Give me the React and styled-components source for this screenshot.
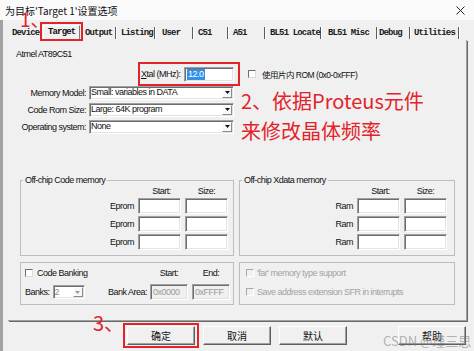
import React from 'react';
import styled, { createGlobalStyle } from 'styled-components';

const UI = `"Liberation Sans", "Noto Sans CJK SC", Arial, sans-serif`;
const CJK = `"Noto Sans CJK SC", "Liberation Sans", sans-serif`;
const MONO = `"Liberation Mono", "DejaVu Sans Mono", monospace`;
const RED = '#e3232a';

const GlobalStyle = createGlobalStyle`
  html, body { margin: 0; padding: 0; background: #f0f0f0; }
  body { width: 474px; height: 351px; overflow: hidden; }
`;

const Window = styled.div`
  position: relative;
  width: 474px;
  height: 351px;
  display: flex;
  flex-direction: column;
  font-family: ${UI};
  font-size: 9px;
  letter-spacing: -0.5px;
  color: #111;
  overflow: hidden;
`;

const TitleBar = styled.div`
  height: 20px;
  flex: none;
  display: flex;
  align-items: center;
  justify-content: space-between;
  padding: 0 9px 0 5px;
  background: #fafafa;
`;

const Title = styled.span`
  font-family: ${CJK};
  font-size: 10px;
  letter-spacing: 0;
`;

const Body = styled.div`
  flex: 1;
  display: flex;
  flex-direction: column;
  border-left: 3px solid #a2a2a2;
  background: #f0f0f0;
`;

const TabStrip = styled.div`
  height: 20px;
  flex: none;
  display: flex;
  align-items: flex-end;
  padding-left: 5px;
  position: relative;
  z-index: 1;
`;

const Tab = styled.div`
  width: ${p => p.$w}px;
  height: 12px;
  margin-bottom: 1px;
  padding-left: ${p => p.$pl}px;
  box-sizing: border-box;
  font-family: ${MONO};
  font-weight: 700;
  font-size: 9px;
  letter-spacing: -0.85px;
  line-height: 12px;
  white-space: nowrap;
  color: #1a1a1a;
  border-right: ${p => (p.$sep ? '1px solid #5a5a5a' : 'none')};
  box-shadow: ${p => (p.$sep ? '1px 0 0 #fff' : 'none')};
`;

const ActiveFrame = styled.div`
  width: 43px;
  height: 19px;
  box-sizing: border-box;
  border: 2px solid ${RED};
  padding: 1px 1px 0 1px;
  margin-bottom: -1px;
  display: flex;
`;

const ActiveTab = styled.div`
  flex: 1;
  border-top: 1px solid #fff;
  border-left: 1px solid #fff;
  border-right: 1px solid #7a7a7a;
  padding-left: 4px;
  font-family: ${MONO};
  font-weight: 700;
  font-size: 9px;
  letter-spacing: -0.85px;
  line-height: 13px;
  color: #111;
`;

const Panel = styled.div`
  margin-left: 5px;
  width: 459px;
  height: 281px;
  flex: none;
  box-sizing: border-box;
  border-right: 1px solid #a0a0a0;
  border-bottom: 1px solid #a0a0a0;
  box-shadow: 1px 1px 0 #696969;
  display: flex;
  flex-direction: column;
`;

const DeviceName = styled.div`
  margin: 8px 0 0 8px;
  line-height: 12px;
  height: 12px;
`;

const TopSection = styled.div`
  margin-top: 2px;
  padding-left: 8px;
  display: grid;
  grid-template-columns: 224px 1fr;
  column-gap: 1px;
`;

const Column = styled.div`
  display: flex;
  flex-direction: column;
`;

const XtalBox = styled.div`
  align-self: flex-end;
  width: 102px;
  height: 24px;
  box-sizing: border-box;
  border: 2px solid ${RED};
  display: flex;
  align-items: center;
  justify-content: space-between;
  padding: 0 4px 0 1px;
`;

const Sunken = styled.div`
  width: ${p => (p.$w ? `${p.$w}px` : 'auto')};
  flex: ${p => (p.$w ? 'none' : '1')};
  height: ${p => p.$h || 16}px;
  box-sizing: border-box;
  border: 1px solid;
  border-color: #a0a0a0 #fff #fff #a0a0a0;
  box-shadow: inset 1px 1px 0 #6d6d6d, inset -1px -1px 0 #e3e3e3;
  background: ${p => (p.$disabled ? '#f0f0f0' : '#fff')};
  color: ${p => (p.$disabled ? '#9a9a9a' : '#111')};
  display: flex;
  align-items: center;
  padding-left: 2px;
  line-height: 11px;
  white-space: nowrap;
  overflow: hidden;
`;

const Highlight = styled.span`
  background: #3390e8;
  color: #fff;
  padding: 0 1px;
`;

const SelectRows = styled.div`
  margin-top: -2px;
  display: flex;
  flex-direction: column;
`;

const SelectRow = styled.div`
  height: 17px;
  display: flex;
  align-items: center;
  gap: 3px;
  padding-right: 6px;
`;

const RowLabel = styled.span`
  width: 70px;
  flex: none;
  text-align: right;
  white-space: nowrap;
`;

const SelectText = styled.span`
  flex: 1;
  padding-left: 1px;
`;

const ArrowBtn = styled.span`
  width: 10px;
  align-self: stretch;
  margin: 1px 1px 1px 0;
  box-sizing: border-box;
  border: 1px solid;
  border-color: #fff #8a8a8a #8a8a8a #fff;
  background: #f8f8f8;
  display: grid;
  place-items: center;
`;

const CheckRow = styled.div`
  height: ${p => p.$h || 24}px;
  display: flex;
  align-items: center;
  gap: ${p => p.$gap ?? 6}px;
  padding-left: ${p => p.$pl ?? 7}px;
  font-family: ${UI};
  font-size: ${p => p.$fs || 9}px;
  color: ${p => (p.$disabled ? '#a3a3a3' : '#111')};
  white-space: nowrap;
`;

const Check = styled.span`
  width: 8px;
  height: 8px;
  flex: none;
  box-sizing: border-box;
  border: 1px solid;
  border-color: ${p => (p.$disabled ? '#a8a8a8 #fff #fff #a8a8a8' : '#6e6e6e #dcdcdc #dcdcdc #6e6e6e')};
  background: ${p => (p.$disabled ? '#f0f0f0' : '#fff')};
`;

const Note = styled.div`
  font-family: ${CJK};
  font-size: 20px;
  line-height: 30px;
  letter-spacing: 0;
  color: ${RED};
  white-space: nowrap;
`;

const GroupRow = styled.div`
  margin-top: ${p => p.$mt}px;
  padding-left: 12px;
  display: grid;
  grid-template-columns: 214px 216px;
  column-gap: 5px;
`;

const Group = styled.fieldset`
  margin: 0;
  padding: 0;
  min-width: 0;
  height: 80px;
  box-sizing: border-box;
  border: 1px solid #bdbdbd;
`;

const Legend = styled.legend`
  margin-left: 2px;
  padding: 0 2px;
  font-size: 9px;
  line-height: 9px;
`;

const MemGrid = styled.div`
  display: grid;
  grid-template-columns: auto 43px 43px;
  grid-template-rows: 11px 16px 16px 16px;
  column-gap: 4px;
  row-gap: 2px;
  justify-content: end;
  align-items: center;
  padding-right: ${p => p.$pr}px;
`;

const ColHead = styled.span`
  text-align: center;
  padding-left: ${p => p.$shift || 0}px;
`;

const CellLabel = styled.span`
  text-align: right;
`;

const PlainGroup = styled.div`
  height: 43px;
  box-sizing: border-box;
  border: 1px solid #bdbdbd;
  padding: 3px 3px 0 ${p => p.$pl}px;
  display: flex;
  flex-direction: column;
  gap: 4px;
`;

const Line = styled.div`
  height: ${p => p.$h}px;
  display: flex;
  align-items: center;
  gap: ${p => p.$gap}px;
  white-space: nowrap;
`;

const Spacer = styled.span`
  flex: 1;
`;

const HeadCell = styled.span`
  width: 38px;
  text-align: center;
`;

const ButtonRow = styled.div`
  flex: 1;
  display: flex;
  align-items: flex-start;
  gap: 8px;
  padding: 2px 8px 0 120px;
`;

const OkFrame = styled.div`
  border: 2px solid ${RED};
  padding: 1px 2px;
  margin-right: -4px;
  display: flex;
`;

const Button = styled.div`
  width: 68px;
  height: 19px;
  margin-top: ${p => p.$mt || 0}px;
  margin-left: ${p => (p.$push ? 'auto' : '0')};
  box-sizing: border-box;
  border: 1px solid;
  border-color: #fff #5f5f5f #5f5f5f #fff;
  box-shadow: inset -1px -1px 0 #a0a0a0;
  background: #f0f0f0;
  font-family: ${CJK};
  font-size: 10px;
  letter-spacing: 0;
  display: grid;
  place-items: center;
  color: #111;
`;

const Mark = styled.span`
  position: absolute;
  left: ${p => p.$x}px;
  top: ${p => p.$y}px;
  font-family: ${CJK};
  font-size: ${p => p.$fs}px;
  line-height: 22px;
  letter-spacing: 0;
  color: ${RED};
  z-index: 3;
`;

const Watermark = styled.span`
  position: absolute;
  left: 383px;
  top: 333px;
  font-family: ${CJK};
  font-size: 13px;
  line-height: 16px;
  letter-spacing: 0;
  color: rgba(120, 120, 120, 0.55);
  z-index: 3;
`;

const tabs = [
  { label: 'Device', w: 32, pl: 4 },
  { label: 'Target', active: true },
  { label: 'Output', w: 33, pl: 2, sep: true },
  { label: 'Listing', w: 39, pl: 5, sep: true },
  { label: 'User', w: 38, pl: 7, sep: true },
  { label: 'C51', w: 35, pl: 5, sep: true },
  { label: 'A51', w: 37, pl: 5, sep: true },
  { label: 'BL51 Locate', w: 56, pl: 5, sep: true },
  { label: 'BL51 Misc', w: 56, pl: 7, sep: true },
  { label: 'Debug', w: 33, pl: 2, sep: true },
  { label: 'Utilities', w: 49, pl: 4, sep: true },
];

const selects = [
  ['Memory Model:', 'Small: variables in DATA'],
  ['Code Rom Size:', 'Large: 64K program'],
  ['Operating system:', 'None'],
];

function Arrow({ color = '#111' }) {
  return (
    <ArrowBtn>
      <svg width="5" height="3" viewBox="0 0 5 3">
        <path d="M0 0h5L2.5 3z" fill={color} />
      </svg>
    </ArrowBtn>
  );
}

function Select({ value, w, disabled }) {
  return (
    <Sunken $w={w} $h={14} $disabled={false} style={{ padding: 0, color: disabled ? '#8a8a8a' : '#111' }}>
      <SelectText>{value}</SelectText>
      <Arrow color={disabled ? '#9a9a9a' : '#111'} />
    </Sunken>
  );
}

function MemGroup({ title, label, pr }) {
  return (
    <Group>
      <Legend>{title}</Legend>
      <MemGrid $pr={pr}>
        <span />
        <ColHead $shift={4}>Start:</ColHead>
        <ColHead>Size:</ColHead>
        {[0, 1, 2].map(i => (
          <React.Fragment key={i}>
            <CellLabel>{label}</CellLabel>
            <Sunken $w={43} />
            <Sunken $w={43} />
          </React.Fragment>
        ))}
      </MemGrid>
    </Group>
  );
}

export default function App() {
  return (
    <Window>
      <GlobalStyle />
      <TitleBar>
        <Title>为目标'Target 1'设置选项</Title>
        <svg width="9" height="9" viewBox="0 0 9 9">
          <path d="M0.5 0.5l8 8M8.5 0.5l-8 8" stroke="#222" strokeWidth="1" />
        </svg>
      </TitleBar>
      <Body>
        <TabStrip>
          {tabs.map(t =>
            t.active ? (
              <ActiveFrame key={t.label}>
                <ActiveTab>{t.label}</ActiveTab>
              </ActiveFrame>
            ) : (
              <Tab key={t.label} $w={t.w} $pl={t.pl} $sep={t.sep}>
                {t.label}
              </Tab>
            )
          )}
        </TabStrip>
        <Panel>
          <DeviceName>Atmel AT89C51</DeviceName>
          <TopSection>
            <Column>
              <XtalBox>
                <span>
                  <u>X</u>tal (MHz):
                </span>
                <Sunken $w={50} $h={15}>
                  <Highlight>12.0</Highlight>
                </Sunken>
              </XtalBox>
              <SelectRows>
                {selects.map(([l, v]) => (
                  <SelectRow key={l}>
                    <RowLabel>{l}</RowLabel>
                    <Select value={v} />
                  </SelectRow>
                ))}
              </SelectRows>
            </Column>
            <Column>
              <CheckRow $fs={8.5}>
                <Check />
                <span>使用片内 ROM (0x0-0xFFF)</span>
              </CheckRow>
              <Note>
                2、依据Proteus元件
                <br />
                来修改晶体频率
              </Note>
            </Column>
          </TopSection>
          <GroupRow $mt={30}>
            <MemGroup title="Off-chip Code memory" label="Eprom" pr={5} />
            <MemGroup title="Off-chip Xdata memory" label="Ram" pr={7} />
          </GroupRow>
          <GroupRow $mt={6}>
            <PlainGroup $pl={4}>
              <Line $h={14} $gap={4}>
                <Check />
                <span>Code Banking</span>
                <Spacer />
                <HeadCell>Start:</HeadCell>
                <HeadCell>End:</HeadCell>
              </Line>
              <Line $h={16} $gap={3}>
                <span>Banks:</span>
                <Select value="2" w={32} disabled />
                <Spacer />
                <span>Bank Area:</span>
                <Sunken $w={38} $disabled>0x0000</Sunken>
                <Sunken $w={38} $disabled style={{ marginLeft: 1 }}>0xFFFF</Sunken>
              </Line>
            </PlainGroup>
            <PlainGroup $pl={6}>
              <CheckRow $h={14} $pl={0} $gap={3} $disabled>
                <Check $disabled />
                <span>'far' memory type support</span>
              </CheckRow>
              <CheckRow $h={16} $pl={0} $gap={3} $disabled>
                <Check $disabled />
                <span>Save address extension SFR in interrupts</span>
              </CheckRow>
            </PlainGroup>
          </GroupRow>
        </Panel>
        <ButtonRow>
          <OkFrame>
            <Button>确定</Button>
          </OkFrame>
          <Button $mt={3}>取消</Button>
          <Button $mt={3}>默认</Button>
          <Button $mt={3} $push>帮助</Button>
        </ButtonRow>
      </Body>
      <Mark $x={20} $y={8} $fs={19}>1、</Mark>
      <Mark $x={93} $y={312} $fs={20}>3、</Mark>
      <Watermark>CSDN @瑾三思</Watermark>
    </Window>
  );
}
